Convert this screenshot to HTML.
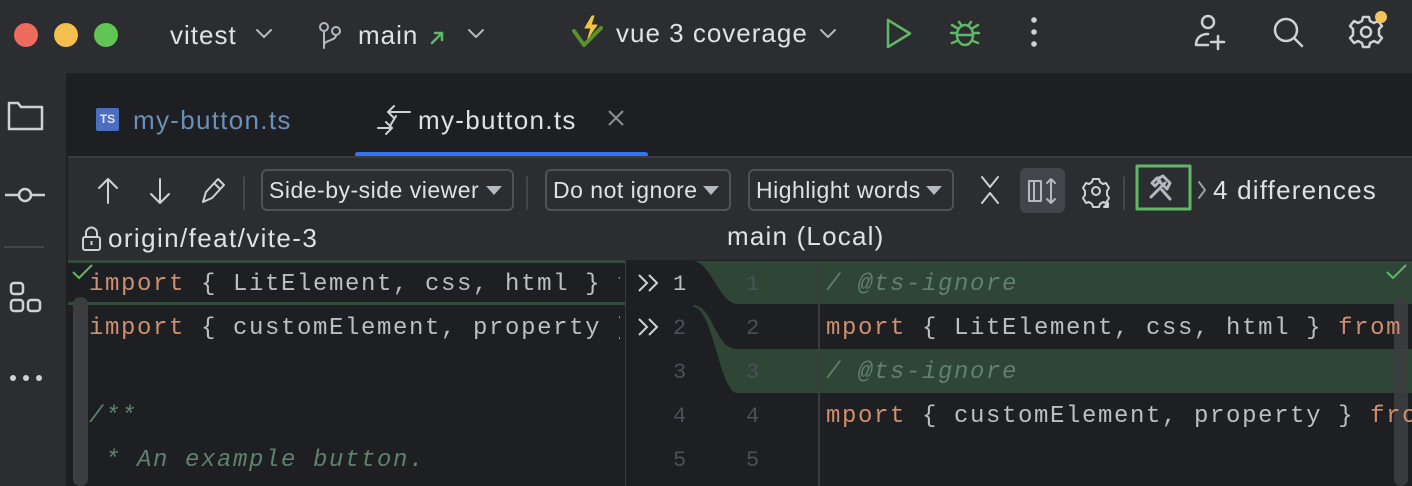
<!DOCTYPE html>
<html><head><meta charset="utf-8"><style>
*{margin:0;padding:0;box-sizing:border-box}
body{width:1412px;height:486px;overflow:hidden;background:#1e1f22;font-family:"Liberation Sans",sans-serif;position:relative;color:#dfe1e5}
.a{position:absolute}
.t{position:absolute;white-space:nowrap;font-size:26px;letter-spacing:1px;line-height:30px}
.code{position:absolute;white-space:pre;font-family:"Liberation Mono","DejaVu Sans Mono",monospace;font-size:24px;letter-spacing:1.6px;line-height:44px;color:#bcbec4}
.k{color:#cf8e6d}.c{color:#5f826b;font-style:italic}
.dd{position:absolute;top:169px;height:42px;border:2px solid #4e5157;border-radius:6px;font-size:23px;letter-spacing:0.5px;line-height:38px;padding-left:6px;color:#dfe1e5;white-space:nowrap}
.dd:after{content:"";position:absolute;right:10px;top:15px;border-left:8px solid transparent;border-right:8px solid transparent;border-top:9px solid #b4b8bf}
.ln{position:absolute;font-family:"Liberation Mono","DejaVu Sans Mono",monospace;font-size:22px;color:#4b5059;line-height:44px}
</style></head><body>
<!-- title bar -->
<div class="a" style="left:0;top:0;width:1412px;height:73px;background:#2b2d30"></div>
<div class="a" style="left:14px;top:23px;width:24px;height:24px;border-radius:50%;background:#ed6a5e"></div>
<div class="a" style="left:54px;top:23px;width:24px;height:24px;border-radius:50%;background:#f5bf4f"></div>
<div class="a" style="left:94px;top:23px;width:24px;height:24px;border-radius:50%;background:#61c554"></div>
<div class="t" style="left:170px;top:20px">vitest</div>
<svg class="a" style="left:0;top:0" width="1412" height="73" fill="none" stroke-linecap="round" stroke-linejoin="round">
<g stroke="#b4b8bf" stroke-width="2"><path d="M257 30l7 7 7-7"/><path d="M469 30l7 7 7-7"/><path d="M821 30l7 7 7-7"/>
<circle cx="324" cy="27" r="4"/><circle cx="336" cy="31" r="4"/><path d="M324 31v17M336 35c0 6-12 5-12 10"/></g>
<path d="M432 43l10-10M435 33h7v7" stroke="#5fb865" stroke-width="2.5"/>
<path d="M574 31l10 14 17-17" stroke="#5e8f2e" stroke-width="4"/>
<path d="M592 16l-7 12h6l-3 10 9-13h-6l3-9z" fill="#f3c33a" stroke="#f3c33a" stroke-width="1"/>
<path d="M888 20v27l22-13.5z" stroke="#5fb865" stroke-width="2.5"/>
<g stroke="#5fb865" stroke-width="2.5"><ellipse cx="965" cy="35" rx="8" ry="10"/><path d="M959 22l3 4M971 22l-3 4M957 35h16M951 33h6M973 33h6M952 43l5-2M978 43l-5-2M952 25l5 3M978 25l-5 3"/></g>
<g fill="#cfd1d6" stroke="none"><circle cx="1034" cy="20" r="2.8"/><circle cx="1034" cy="32" r="2.8"/><circle cx="1034" cy="44" r="2.8"/></g>
<g stroke="#cfd1d6" stroke-width="2.5"><circle cx="1208" cy="22" r="6"/><path d="M1196 45c0-8 6-11 12-11M1196 45h12M1218 36v13M1211 42h13"/>
<circle cx="1286" cy="30" r="11"/><path d="M1294 38l8 8"/>
<circle cx="1366" cy="32" r="5"/><path d="M1363 17h6l1 4 4 2 4-2 4 5-3 3v6l3 3-4 5-4-2-4 2-1 4h-6l-1-4-4-2-4 2-4-5 3-3v-6l-3-3 4-5 4 2 4-2z"/></g>
<circle cx="1381" cy="17" r="6" fill="#f2c55c"/>
</svg>
<div class="t" style="left:358px;top:20px">main</div>
<div class="t" style="left:616px;top:18px">vue 3 coverage</div>
<!-- sidebar -->
<div class="a" style="left:0;top:73px;width:66px;height:413px;background:#2b2d30"></div>
<div class="a" style="left:66px;top:73px;width:2px;height:413px;background:#1e1f22"></div>
<svg class="a" style="left:0;top:73px" width="66" height="413" fill="none" stroke="#cfd1d6" stroke-width="2.5" stroke-linejoin="round">
<path d="M9 30h9l3 4h21v22H9z"/>
<circle cx="25" cy="122" r="6"/><path d="M5 122h14M31 122h14"/>
<path d="M4 174h40" stroke="#43454a" stroke-width="2"/>
<rect x="11" y="210" width="12" height="11" rx="3"/><rect x="11" y="227" width="12" height="11" rx="3"/><rect x="28" y="227" width="12" height="11" rx="3"/>
<g fill="#cfd1d6" stroke="none"><circle cx="13" cy="305" r="3"/><circle cx="26" cy="305" r="3"/><circle cx="39" cy="305" r="3"/></g>
</svg>
<!-- tabs -->
<div class="a" style="left:96px;top:108px;width:23px;height:23px;background:#4a6fc0;border-radius:2px;color:#dfe1e5;font-size:12px;line-height:23px;text-align:center;font-weight:bold">TS</div>
<div class="t" style="left:133px;top:105px;color:#6b8fb8;letter-spacing:1.3px">my-button.ts</div>
<svg class="a" style="left:372px;top:100px" width="40" height="40" fill="none" stroke="#cfd1d6" stroke-width="2" stroke-linecap="round"><path d="M16 12h22M22 6l-6 6 6 6M6 28h14M14 22l6 6-6 6M24 16l-6 10"/></svg>
<div class="t" style="left:418px;top:105px;color:#dfe1e5;letter-spacing:1.3px">my-button.ts</div>
<svg class="a" style="left:606px;top:108px" width="20" height="20" stroke="#8c8f94" stroke-width="2"><path d="M3 3l14 14M17 3L3 17"/></svg>
<div class="a" style="left:355px;top:152px;width:293px;height:5px;border-radius:3px;background:#3574f0"></div>
<!-- toolbar -->
<div class="a" style="left:68px;top:156px;width:1344px;height:104px;background:#2b2d30;border-top:2px solid #393b40"></div>
<svg class="a" style="left:68px;top:157px" width="1344" height="70" fill="none" stroke="#cfd1d6" stroke-width="2" stroke-linecap="round" stroke-linejoin="round">
<path d="M40 22v24M31 31l9-9 9 9"/><path d="M92 22v24M83 37l9 9 9-9"/><path d="M135 45l3-10 12-13 6 6-12 13zM146 26l6 6"/>
<path d="M176 20v32" stroke="#43454a"/>
<path d="M459 20v32" stroke="#43454a"/>
<path d="M914 20l8 10 8-10M914 46l8-10 8 10"/>
<rect x="952" y="11" width="45" height="45" rx="6" fill="#43454a" stroke="none"/>
<path d="M961 24h12v20h-12zM966 24v20M983 22v24M979 26l4-4 4 4M979 42l4 4 4-4" stroke="#b4b8bf"/>
<circle cx="1028" cy="34" r="4"/><path d="M1025 22h6l1 3 3 2 3-1 3 5-2 3v4l2 3-3 5-3-1-3 2-1 3h-6l-1-3-3-2-3 1-3-5 2-3v-4l-2-3 3-5 3 1 3-2z"/>
<path d="M1036 50l4-4v4z" fill="#cfd1d6"/>
<path d="M1056 20v32" stroke="#43454a"/>
<rect x="1069" y="9" width="53" height="43" fill="none" stroke="#5fb865" stroke-width="3"/>
<path d="M1083 40l14-14M1089 22l6-3 7 7-3 6zM1084 26l5-5 3 3-5 5zM1094 33l8 9" stroke="#b4b8bf" stroke-width="3"/>
<path d="M1131 25l6 8-6 8" stroke="#9a9da3"/>
</svg>
<div class="dd" style="left:261px;width:253px">Side-by-side viewer</div>
<div class="dd" style="left:545px;width:186px">Do not ignore</div>
<div class="dd" style="left:748px;width:206px">Highlight words</div>
<div class="t" style="left:1213px;top:175px;letter-spacing:1.2px">4 differences</div>
<!-- header row -->
<svg class="a" style="left:80px;top:226px" width="24" height="26" fill="none" stroke="#cfd1d6" stroke-width="2"><rect x="3" y="11" width="17" height="13" rx="2"/><path d="M6 11V7a5.5 5.5 0 0 1 11 0v4M11.5 15v4"/></svg>
<div class="t" style="left:108px;top:223px;letter-spacing:1.4px">origin/feat/vite-3</div>
<div class="t" style="left:727px;top:221px;letter-spacing:1.2px">main (Local)</div>
<!-- code area -->
<div class="a" style="left:820px;top:261px;width:592px;height:43px;background:#2f4535"></div>
<div class="a" style="left:820px;top:349px;width:592px;height:44px;background:#2f4535"></div>
<div class="a" style="left:68px;top:260px;width:557px;height:3px;background:#344a3a"></div>
<div class="a" style="left:68px;top:302px;width:557px;height:3px;background:#344a3a"></div>
<svg class="a" style="left:625px;top:261px" width="195" height="225">
<path d="M68 0H195V43H112C95 43 85 0 68 0z" fill="#2f4535"/>
<path d="M68 44C88 44 90 88 112 88H195V132H112C95 132 88 46 68 46z" fill="#2f4535"/>
<path d="M0 0v225" stroke="#393b40" stroke-width="2"/>
<path d="M194 0v225" stroke="#393b40" stroke-width="2"/>
</svg>
<div class="a" style="left:73px;top:297px;width:15px;height:189px;border-radius:7px;background:#3c3d40"></div>
<div class="a" style="left:1394px;top:298px;width:14px;height:188px;border-radius:7px;background:#3c3d40;opacity:.9"></div>
<svg class="a" style="left:70px;top:263px" width="30" height="22" fill="none" stroke="#5fb865" stroke-width="2"><path d="M3 9l6 6 13-13"/></svg>
<svg class="a" style="left:1384px;top:263px" width="28" height="22" fill="none" stroke="#5fb865" stroke-width="2"><path d="M3 9l6 6 13-13"/></svg>
<div class="a" style="left:68px;top:261px;width:552px;height:225px;overflow:hidden">
<div class="code" style="left:21px;top:2px"><span class="k">import</span> { LitElement, css, html } <span class="k">from</span>
<span class="k">import</span> { customElement, property } <span class="k">from</span>

<span class="c">/**</span>
<span class="c"> * An example button.</span></div></div>
<div class="a" style="left:820px;top:261px;width:592px;height:225px;overflow:hidden">
<div class="code" style="left:6px;top:2px"><span class="c">/ @ts-ignore</span>
<span class="k">mport</span> { LitElement, css, html } <span class="k">from</span>
<span class="c">/ @ts-ignore</span>
<span class="k">mport</span> { customElement, property } <span class="k">from</span></div></div>
<svg class="a" style="left:636px;top:270px" width="30" height="80" fill="none" stroke="#cfd1d6" stroke-width="2"><path d="M3 5l8 8-8 8M13 5l8 8-8 8M3 49l8 8-8 8M13 49l8 8-8 8"/></svg>
<div class="ln" style="left:673px;top:263px;color:#bcbec4">1</div>
<div class="ln" style="left:673px;top:307px">2</div>
<div class="ln" style="left:673px;top:351px">3</div>
<div class="ln" style="left:673px;top:395px">4</div>
<div class="ln" style="left:673px;top:439px">5</div>
<div class="ln" style="left:746px;top:263px">1</div>
<div class="ln" style="left:746px;top:307px">2</div>
<div class="ln" style="left:746px;top:351px">3</div>
<div class="ln" style="left:746px;top:395px">4</div>
<div class="ln" style="left:746px;top:439px">5</div>
</body></html>
